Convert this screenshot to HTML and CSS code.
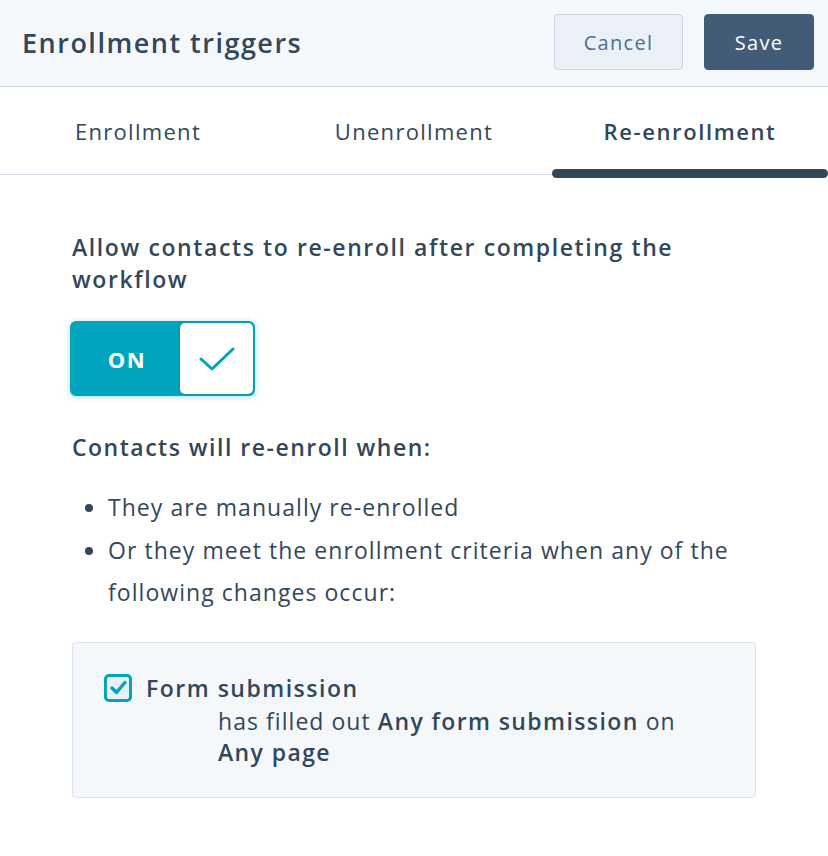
FILE: index.html
```html
<!DOCTYPE html>
<html>
<head>
<meta charset="utf-8">
<link rel="stylesheet" href="styles.css">
</head>
<body>
<header class="header">
  <h1 class="title">Enrollment triggers</h1>
  <div class="actions">
    <button class="btn btn-secondary">Cancel</button>
    <button class="btn btn-primary">Save</button>
  </div>
</header>
<nav class="tabs">
  <div class="tab">Enrollment</div>
  <div class="tab">Unenrollment</div>
  <div class="tab tab-active">Re-enrollment</div>
</nav>
<main class="content">
  <h2 class="heading">Allow contacts to re-enroll after completing the workflow</h2>
  <div class="toggle">
    <span class="toggle-label">ON</span>
    <span class="toggle-knob">
      <svg width="36" height="26" viewBox="0 0 36 26"><path d="M2 13 L13 23 L34 3" fill="none" stroke="#00a4bd" stroke-width="3" stroke-linecap="round" stroke-linejoin="round"/></svg>
    </span>
  </div>
  <h3 class="subheading">Contacts will re-enroll when:</h3>
  <ul class="list">
    <li>They are manually re-enrolled</li>
    <li>Or they meet the enrollment criteria when any of the following changes occur:</li>
  </ul>
  <div class="card">
    <span class="checkbox">
      <svg width="17" height="15" viewBox="0 0 17 15"><path d="M2 8 L6.5 12.5 L15 2.5" fill="none" stroke="#00a4bd" stroke-width="3.4" stroke-linecap="round" stroke-linejoin="round"/></svg>
    </span>
    <div class="card-body">
      <div class="card-title">Form submission</div>
      <div class="card-desc">has filled out <b>Any form submission</b> on <b>Any page</b></div>
    </div>
  </div>
</main>
</body>
</html>
```
FILE: styles.css
```css
* { box-sizing: border-box; }
body {
  margin: 0;
  font-family: "Open Sans", "Noto Sans", sans-serif;
  color: #33475b;
  background: #fff;
}
.header {
  height: 87px;
  background: #f5f8fa;
  border-bottom: 1px solid #cbd6e2;
  display: flex;
  align-items: center;
  justify-content: space-between;
  padding: 0 14px 2px 22px;
}
.title {
  margin: 0;
  font-size: 27px;
  font-weight: 600;
  letter-spacing: 1.5px;
}
.actions { display: flex; gap: 21px; }
.btn {
  height: 56px;
  border-radius: 4px;
  font-family: inherit;
  font-size: 20px;
  font-weight: 400;
  letter-spacing: 1.3px;
  cursor: pointer;
}
.btn-secondary {
  width: 129px;
  background: #eaf0f6;
  border: 1px solid #cbd6e2;
  color: #506e91;
}
.btn-primary {
  width: 110px;
  background: #425b76;
  border: 1px solid #425b76;
  color: #fff;
}
.tabs {
  display: grid;
  grid-template-columns: 1fr 1fr 1fr;
  height: 88px;
  border-bottom: 1px solid #cbd6e2;
}
.tab {
  position: relative;
  display: flex;
  align-items: center;
  justify-content: center;
  font-size: 22px;
  letter-spacing: 1.3px;
}
.tab-active { font-weight: 600; letter-spacing: 1.6px; }
.tab-active::after {
  content: "";
  position: absolute;
  left: 0;
  right: 0;
  bottom: -4px;
  height: 9px;
  border-radius: 5px;
  background: #33475b;
}
.content { padding: 56px 72px 0 72px; }
.heading {
  margin: 0;
  font-size: 23px;
  font-weight: 600;
  line-height: 32px;
  letter-spacing: 1.6px;
  max-width: 680px;
}
.toggle {
  margin: 26px 0 0 -2px;
  width: 185px;
  height: 75px;
  display: flex;
  background: #00a4bd;
  border: 2px solid #00a4bd;
  border-radius: 6px;
  box-shadow: 0 1px 6px rgba(0, 164, 189, 0.35);
}
.toggle-label {
  flex: 1;
  display: flex;
  align-items: center;
  justify-content: center;
  color: #fff;
  font-size: 22px;
  font-weight: 700;
  letter-spacing: 1.5px;
  padding-left: 2px;
}
.toggle-knob {
  width: 73px;
  background: #fff;
  border-radius: 5px;
  display: flex;
  align-items: center;
  justify-content: center;
  box-shadow: -1px 0 3px rgba(0,0,0,0.08);
}
.subheading {
  margin: 35px 0 0 0;
  font-size: 23px;
  font-weight: 600;
  line-height: 32px;
  letter-spacing: 1.5px;
}
.list {
  margin: 23px 0 0 0;
  padding-left: 36px;
  font-size: 23px;
  line-height: 42.5px;
  letter-spacing: 1.05px;
}
.card {
  margin-top: 28px;
  width: 684px;
  background: #f5f8fa;
  border: 1px solid #dfe3eb;
  border-radius: 4px;
  padding: 29px 20px 29px 31px;
  display: flex;
  align-items: flex-start;
}
.checkbox {
  flex: none;
  width: 28px;
  height: 28px;
  margin-top: 2px;
  border: 3px solid #00a4bd;
  border-radius: 5px;
  background: #eaf0f6;
  display: flex;
  align-items: center;
  justify-content: center;
}
.card-body {
  margin-left: 14px;
  font-size: 23px;
  line-height: 32px;
  letter-spacing: 1.05px;
}
.card-title { font-weight: 600; letter-spacing: 1.5px; }
.card-desc { padding-left: 72px; line-height: 31px; margin-top: 2px; }
.card-desc b { font-weight: 600; letter-spacing: 1.4px; white-space: nowrap; }
```
